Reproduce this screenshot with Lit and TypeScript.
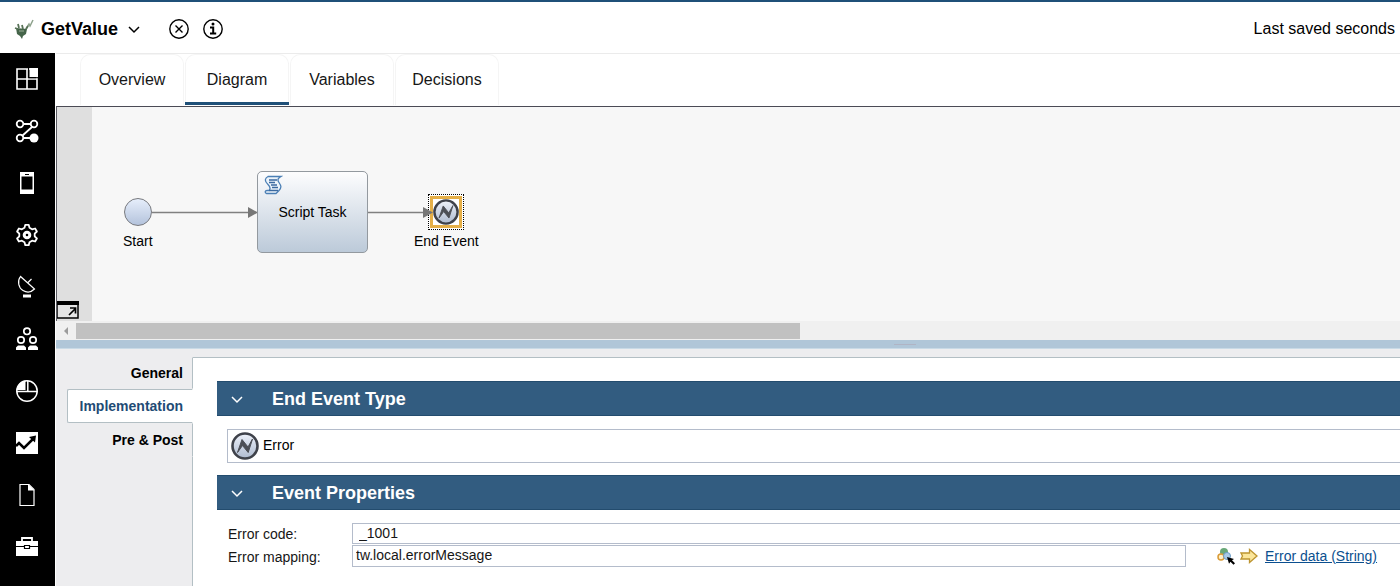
import { LitElement, html, css, svg } from "lit";
import { customElement, state } from "lit/decorators.js";

const navIcons = [
  {
    label: "Dashboard",
    art: svg`<path d="M2 2h20v20H2zM12 2v20M2 12h20" fill="none" stroke="#fff" stroke-width="1.600"/><path d="M14.500 1H23v9h-8.500z" fill="#fff"/><path d="M13.500 1v9.700H23" fill="none" stroke="#000" stroke-width="1"/>`,
  },
  {
    label: "Processes",
    art: svg`<g fill="none" stroke="#fff" stroke-width="1.8"><circle cx="5" cy="5" r="3.3"/><circle cx="19" cy="5" r="3.3"/><circle cx="5" cy="19" r="3.3"/><path d="M8 5h8M17 8L7 17M8 19h8"/></g><circle cx="19" cy="19" r="4.5" fill="#fff"/>`,
  },
  {
    label: "User interface",
    art: svg`<path d="M5 1h14v22H5zM6.500 5.500v13h11v-13z" fill="#fff" fill-rule="evenodd"/><path d="M10 3.500h4" stroke="#000"/>`,
  },
  {
    label: "Services",
    art: svg`<path d="M10.300 1.800h3.400l.8 3 2.600 1.500 3-.8 1.800 3-2.200 2.200v2.600l2.200 2.200-1.800 3-3-.8-2.600 1.500-.8 3h-3.400l-.8-3-2.600-1.500-3 .8-1.800-3 2.200-2.200v-2.600L2.100 8.500l1.800-3 3 .8 2.600-1.500z" fill="none" stroke="#fff" stroke-width="1.800" stroke-linejoin="round"/><circle cx="12" cy="12" r="2.800" fill="none" stroke="#fff" stroke-width="3"/>`,
  },
  {
    label: "Events",
    art: svg`<path d="M5.500 1.500C2 6 3.500 13 8 15.500c4 2.300 8.500 1.500 11.500-1.500zM12.500 8l4-4" fill="none" stroke="#fff" stroke-width="1.200"/><path d="M8 19.500h8v3H8z" fill="#fff"/>`,
  },
  {
    label: "Teams",
    art: svg`<g fill="none" stroke="#fff" stroke-width="1.700"><circle cx="12" cy="4.300" r="3.200"/><circle cx="6" cy="13" r="3.200"/><circle cx="18" cy="13" r="3.200"/></g><path d="M1 23v-2.500l2-2h6l2 2V23zM13 23v-2.500l2-2h6l2 2V23z" fill="#fff"/>`,
  },
  {
    label: "Data",
    art: svg`<circle cx="12" cy="12" r="10.200" fill="none" stroke="#fff" stroke-width="1.500"/><path d="M10.500 1.500v9.500H1.500C2 6 6 2 10.500 1.500z" fill="#fff"/><path d="M12.800 2v10M1.500 12.500h21" stroke="#fff" stroke-width="1.500"/>`,
  },
  {
    label: "Performance",
    art: svg`<path d="M1 1h22v22H1z" fill="#fff"/><path d="M1 15l3-3 5 5 9-9" fill="none" stroke="#000" stroke-width="2.500"/><path d="M14 6l7-1.500-1 7z"/>`,
  },
  {
    label: "Files",
    art: svg`<path d="M5 1.500h9l5 5v16H5z" fill="none" stroke="#fff" stroke-width="1.200"/><path d="M13 1l6.500 6.500H13z" fill="#fff"/>`,
  },
  {
    label: "Toolkits",
    art: svg`<path d="M1 6h22v5H1zM1 12h22v9H1z" fill="#fff"/><path d="M7 6V3h10v3" fill="none" stroke="#fff" stroke-width="1.800"/><path d="M9.500 10.500h5v3h-5z" fill="#fff" stroke="#000" stroke-width="1.200"/>`,
  },
];

const errorEvent = html`<svg viewBox="0 0 28 28" aria-hidden="true">
  <defs>
    <linearGradient id="orb" x1="0" y1="0" x2="0" y2="1">
      <stop offset="0" stop-color="#eef2fa" />
      <stop offset="1" stop-color="#aebbd0" />
    </linearGradient>
  </defs>
  <circle cx="14" cy="14" r="12.500" fill="url(#orb)" stroke="#3f424a" stroke-width="2.600" />
  <path d="M6.500 20.500L11 7.500l6 7.500 4.500-8-4.300 13.500-5.700-7z" fill="#4c4f56" stroke="#4c4f56" />
</svg>`;

const chevron = html`<svg class="chevron" viewBox="0 0 14 10" aria-hidden="true">
  <path d="M2 3l5 5 5-5" fill="none" stroke="currentColor" stroke-width="1.500" />
</svg>`;

@customElement("app-root")
export class AppRoot extends LitElement {
  @state() private view = "Diagram";
  @state() private section = "Implementation";

  static styles = css`
    :host {
      display: flex;
      flex-direction: column;
      min-height: 100vh;
      overflow: hidden;
      background: #fff;
      color: #161616;
      font: 14px/16px "Liberation Sans", Arial, sans-serif;
    }
    * {
      box-sizing: border-box;
    }
    button {
      border: 0;
      padding: 0;
      background: none;
      color: inherit;
      font: inherit;
    }
    svg {
      display: block;
      flex: none;
    }
    .header {
      display: flex;
      align-items: center;
      height: 53px;
      padding: 2px 5px 0 14px;
      border-top: 2px solid #1f5078;
    }
    .plug {
      width: 20px;
      height: 20px;
      margin-right: 7px;
    }
    .title {
      display: flex;
      align-items: center;
      gap: 9px;
      color: #000;
      font-size: 18px;
      font-weight: bold;
      line-height: 24px;
    }
    .chevron {
      width: 14px;
      height: 10px;
    }
    .tools {
      display: flex;
      gap: 14px;
      margin-left: 28px;
    }
    .tools svg {
      width: 20px;
      height: 20px;
    }
    .saved {
      margin-left: auto;
      color: #000;
      font-size: 16px;
      line-height: 20px;
    }
    .body {
      display: flex;
      flex: 1;
    }
    .nav {
      display: flex;
      flex: none;
      flex-direction: column;
      align-items: center;
      width: 55px;
      padding-right: 1px;
      background: #000;
    }
    .nav button {
      display: grid;
      place-items: center;
      width: 52px;
      height: 52px;
    }
    .nav svg {
      width: 24px;
      height: 24px;
    }
    .main {
      display: flex;
      flex: 1;
      flex-direction: column;
      min-width: 0;
      padding-left: 1px;
    }
    .tabs {
      display: flex;
      gap: 1px;
      height: 53px;
      padding: 0 0 1px 24px;
      border-top: 1px solid #ebebeb;
    }
    .tabs button {
      width: 104px;
      border: 1px solid #f5f5f5;
      border-bottom: 0;
      border-radius: 10px 10px 0 0;
      font-size: 16px;
      line-height: 20px;
    }
    .tabs .current {
      box-shadow: 0 3px 0 #1f5078;
      border-radius: 10px 10px 0 0;
      height: 48px;
      padding-top: 3px;
      clip-path: inset(0 0 -3px 0);
      background: #fff;
    }
    .editor {
      display: flex;
      flex: 1;
      min-height: 215px;
      border-top: 1px solid #4b4b55;
      border-left: 1px solid #5b5b63;
      background: #f7f7f7;
    }
    .palette {
      display: flex;
      flex: none;
      align-items: flex-end;
      width: 35px;
      padding-bottom: 2px;
      background: #dfdfdf;
    }
    .palette svg {
      width: 22px;
      height: 18px;
    }
    .canvas {
      position: relative;
      flex: 1;
      overflow: hidden;
      color: #000;
    }
    .flows {
      position: absolute;
      top: 0;
      left: 0;
      width: 400px;
      height: 200px;
    }
    .node {
      position: absolute;
      display: flex;
      flex-direction: column;
      align-items: center;
    }
    .start {
      top: 91px;
      left: 31px;
      gap: 7px;
    }
    .circle {
      width: 28px;
      height: 28px;
      border: 1px solid #77797e;
      border-radius: 50%;
      background: linear-gradient(#e6eefb, #b4c3dc);
    }
    .task {
      top: 64px;
      left: 165px;
      justify-content: center;
      width: 111px;
      height: 82px;
      border: 1px solid #93999f;
      border-radius: 5px;
      background: linear-gradient(#fdfdfe, #bccad9);
    }
    .task svg {
      position: absolute;
      top: 3px;
      left: 5px;
      width: 20px;
      height: 20px;
    }
    .end {
      top: 87px;
      left: 322px;
      gap: 3px;
    }
    .selected {
      border: 1px dotted #000;
      background: #fff;
    }
    .glyph {
      width: 32px;
      height: 32px;
      margin: 1px;
      border: 3px solid #e5af48;
      background: #fff;
    }
    .scroll {
      display: flex;
      align-items: center;
      height: 19px;
      background: #f0f0f0;
    }
    .scroll svg {
      width: 20px;
      height: 10px;
    }
    .thumb {
      flex: none;
      width: 53.9%;
      height: 16px;
      background: #c1c1c1;
    }
    .splitter {
      display: flex;
      align-items: center;
      justify-content: center;
      height: 9px;
      padding-left: 354px;
      background: #b0c6d8;
      border-bottom: 1px solid #c9dae6;
    }
    .grip {
      width: 22px;
      height: 1px;
      background: #b0b4c4;
    }
    .props {
      display: flex;
      padding-top: 8px;
      background: #ededef;
    }
    .sections {
      display: flex;
      flex: none;
      flex-direction: column;
      width: 137px;
      padding-left: 11px;
      color: #000;
    }
    .sections button {
      height: 34px;
      padding-right: 9px;
      border: 1px solid transparent;
      border-right-color: #b3bfc4;
      font-weight: bold;
      text-align: right;
    }
    .sections button:first-child {
      height: 32px;
    }
    .sections .current {
      border-color: #b3bfc4;
      border-right-color: #fff;
      border-radius: 2px 0 0 2px;
      background: #fff;
      color: #1f4b75;
    }
    .rest {
      flex: 1;
      border-right: 1px solid #b3bfc4;
    }
    .panel {
      flex: 1;
      min-width: 0;
      padding: 23px 0 19px 24px;
      border-top: 1px solid #b3bfc4;
      background: #fff;
    }
    .band {
      display: flex;
      align-items: center;
      gap: 28px;
      height: 35px;
      margin: 0;
      padding: 1px 0 0 13px;
      border-top: 1px solid #234c6e;
      border-bottom: 1px solid #234c6e;
      background: #325c80;
      color: #fff;
      font-size: 18px;
      line-height: 24px;
    }
    .event-type {
      display: flex;
      align-items: center;
      gap: 4px;
      width: calc(100% - 10px);
      height: 34px;
      margin: 13px 0 12px 10px;
      padding-left: 3px;
      border: 1px solid #b4bccb;
      border-right: 0;
      color: #000;
    }
    .event-type span {
      padding-bottom: 2px;
    }
    .event-type svg {
      width: 28px;
      height: 28px;
    }
    .fields {
      display: grid;
      grid-template-columns: 124px 1fr 214px;
      row-gap: 1px;
      align-items: center;
      padding: 13px 0 0 11px;
    }
    .fields label {
      padding-top: 1px;
    }
    .fields input {
      width: 100%;
      height: 22px;
      padding: 0 3px 2px;
      border: 1px solid #b4bccb;
      background: #fff;
      color: #161616;
      font: inherit;
    }
    .fields .code {
      grid-column: 2 / 4;
      height: 21px;
      padding-left: 6px;
      border-right: 0;
    }
    .binding {
      display: flex;
      align-items: center;
      padding-left: 31px;
    }
    .pick svg {
      width: 18px;
      height: 18px;
    }
    .arrow {
      width: 18px;
      height: 16px;
      margin: 0 7px 0 5px;
    }
    a {
      color: #0b4f8f;
    }
  `;

  render() {
    return html`
      <header class="header">
        <svg class="plug" viewBox="0 0 20 20" aria-hidden="true">
          <path d="M12 10l3-5 1 2 3-6" fill="none" stroke="#8fa38d" stroke-width="1.500" />
          <path d="M2 9l11 1-1 5-3 2-1 3-2-3-3-2z" fill="#45644a" />
          <path d="M5 9L4 5M9 10L8 6M12 10l2-3M1 9l3 1" fill="none" stroke="#587257" stroke-width="1.800" />
          <path d="M5 12h5" stroke="#9caf96" />
        </svg>
        <button class="title">GetValue ${chevron}</button>
        <div class="tools">
          <button aria-label="Close">
            <svg viewBox="0 0 20 20" fill="none" stroke="#000" stroke-width="1.400">
              <circle cx="10" cy="10" r="9.200" />
              <path d="M6.500 6.500l7 7M13.500 6.500l-7 7" />
            </svg>
          </button>
          <button aria-label="Information">
            <svg viewBox="0 0 20 20" fill="none" stroke="#000" stroke-width="1.400">
              <circle cx="10" cy="10" r="9.200" />
              <path d="M7 8.500h3.200v5.500M7 14.500h6.200" stroke-width="2" />
              <circle cx="10" cy="5" r="1.500" fill="#000" stroke="none" />
            </svg>
          </button>
        </div>
        <span class="saved">Last saved seconds</span>
      </header>
      <div class="body">
        <nav class="nav">
          ${navIcons.map(
            (n) => html`<button aria-label=${n.label}><svg viewBox="0 0 24 24">${n.art}</svg></button>`
          )}
        </nav>
        <main class="main">
          <div class="tabs">
            ${["Overview", "Diagram", "Variables", "Decisions"].map(
              (t) => html`<button class=${t === this.view ? "current" : ""} @click=${() => (this.view = t)}>${t}</button>`
            )}
          </div>
          ${this.renderEditor()}
          <div class="scroll">
            <svg viewBox="0 0 20 10" aria-hidden="true"><path d="M12 1v8L8 5z" fill="#9c9c9c" /></svg>
            <div class="thumb"></div>
          </div>
          <div class="splitter"><div class="grip"></div></div>
          ${this.renderProperties()}
        </main>
      </div>
    `;
  }

  private renderEditor() {
    return html`<section class="editor">
      <div class="palette">
        <button aria-label="Expand palette">
          <svg viewBox="0 0 22 18">
            <path d="M0 2h21v15H0z" fill="#e4e4e4" stroke="#000" stroke-width="1.500" />
            <path d="M0 0h22v4H0z" />
            <path d="M12 14l6-6M13 7h5.500v5.500" fill="none" stroke="#000" stroke-width="1.700" />
          </svg>
        </button>
      </div>
      <div class="canvas">
        <svg class="flows" viewBox="0 0 400 200" aria-hidden="true">
          <path d="M60 105.500h98M276 105.500h58" stroke="#808080" stroke-width="1.300" />
          <path d="M156 100v11l10-5.500z" fill="#777" />
        </svg>
        <div class="node start"><div class="circle"></div>Start</div>
        <div class="node task">
          <svg viewBox="0 0 20 20" fill="none" stroke="#4b7fb5" stroke-width="1.300">
            <path d="M5 1.500h13c-3 2-4 3-2 6s3 5 0 8l-3 3H3.500c-2-1-1.500-3 .5-3h2c2-2 1-4-1-6C1 6 2 3 5 1.500z" fill="#edf4fb" />
            <path d="M6 5h8M6 7.500h6M8 10h6M9 12.500h6M6 15.500h9" stroke="#3c6aa0" />
          </svg>
          Script Task
        </div>
        <div class="node end">
          <div class="selected"><div class="glyph">${errorEvent}</div></div>
          End Event
        </div>
        <svg class="flows" viewBox="0 0 400 200" aria-hidden="true">
          <path d="M331 100v11l10-5.500z" fill="#777" />
        </svg>
      </div>
    </section>`;
  }

  private renderProperties() {
    return html`<section class="props">
      <div class="sections">
        ${["General", "Implementation", "Pre & Post"].map(
          (s) =>
            html`<button class=${s === this.section ? "current" : ""} @click=${() => (this.section = s)}>${s}</button>`
        )}
        <div class="rest"></div>
      </div>
      <div class="panel">
        <h2 class="band">${chevron} End Event Type</h2>
        <button class="event-type">${errorEvent} <span>Error</span></button>
        <h2 class="band">${chevron} Event Properties</h2>
        <div class="fields">
          <label for="code">Error code:</label>
          <input class="code" id="code" value="_1001" />
          <label for="mapping">Error mapping:</label>
          <input id="mapping" value="tw.local.errorMessage" />
          <div class="binding">
            <button class="pick" aria-label="Select variable">
              <svg viewBox="0 0 18 18">
                <circle cx="7" cy="5" r="4" fill="#69a878" />
                <circle cx="4" cy="10" r="3" fill="#fff0c5" stroke="#d99a36" stroke-width="1.500" />
                <circle cx="10" cy="9" r="3.500" fill="#a9cbe7" stroke="#6a9bc4" />
                <path d="M10 10l7 2-2 1.300 3 3-1.500 1.500-3-3-1.500 2z" />
              </svg>
            </button>
            <svg class="arrow" viewBox="0 0 18 16" aria-hidden="true">
              <path d="M1 5h8.500V1.500L17 8l-7.500 6.500V11H1l1.500-3z" fill="#fbe69b" stroke="#bd9531" stroke-width="1.300" />
            </svg>
            <a href="#error-data">Error data (String)</a>
          </div>
        </div>
      </div>
    </section>`;
  }
}
